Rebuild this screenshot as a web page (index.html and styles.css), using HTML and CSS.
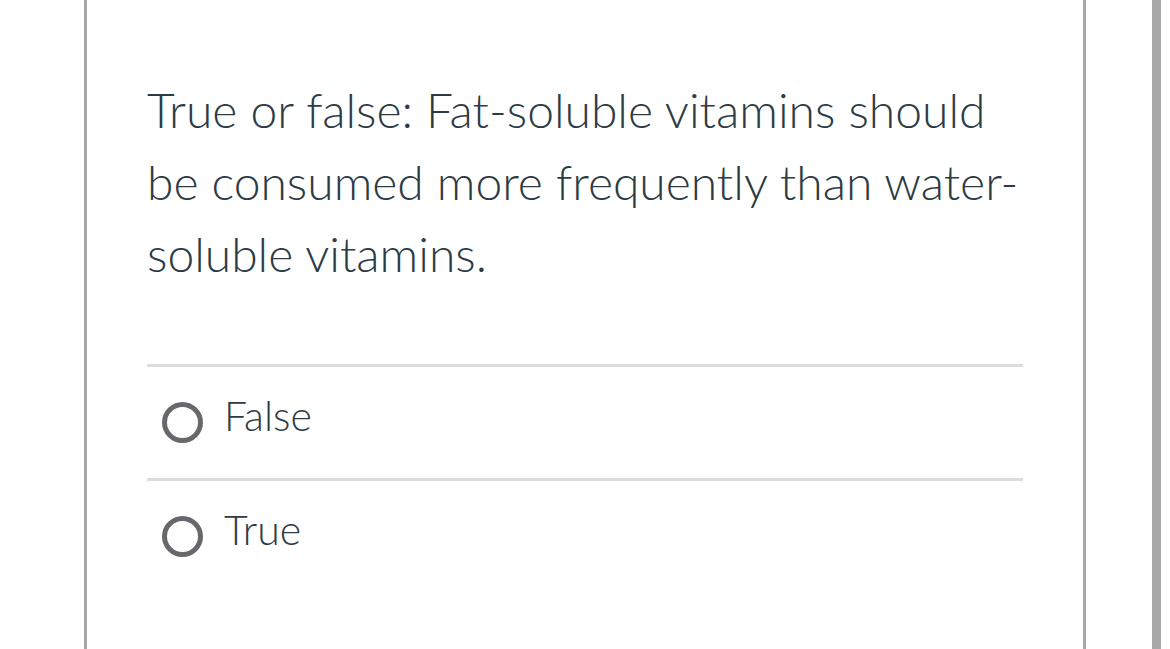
FILE: index.html
```html
<!DOCTYPE html>
<html lang="en">
<head>
<meta charset="utf-8">
<title>Quiz question</title>
<link rel="stylesheet" href="styles.css">
</head>
<body>
<div class="page">
  <div class="card">
    <div class="question">True or false: Fat-soluble vitamins should be consumed more frequently than water-soluble vitamins.</div>
    <div class="answers">
      <label class="answer">
        <span class="radio"></span>
        <span class="answer-text">False</span>
      </label>
      <label class="answer">
        <span class="radio"></span>
        <span class="answer-text">True</span>
      </label>
    </div>
  </div>
  <div class="scrollbar"></div>
</div>
</body>
</html>
```
FILE: styles.css
```css
html, body {
  margin: 0;
  padding: 0;
  background: #ffffff;
}
body {
  font-family: Lato, "Open Sans", "Liberation Sans", sans-serif;
  color: #2d3b45;
  height: 649px;
  overflow: hidden;
}
.page {
  display: flex;
  height: 649px;
  padding-left: 84px;
}
.card {
  width: 876px;
  border-left: 3px solid #a8a8a8;
  border-right: 3px solid #a8a8a8;
  padding: 74px 60px 0 60px;
  flex-shrink: 0;
}
.question {
  font-size: 48px;
  font-weight: 300;
  line-height: 72px;
}
.answers {
  margin-top: 74px;
}
.answer {
  display: flex;
  align-items: center;
  height: 111px;
  border-top: 3px solid #dcdcdc;
  padding-left: 15px;
}
.radio {
  width: 31px;
  height: 31px;
  border: 5px solid #68676c;
  border-radius: 50%;
  flex-shrink: 0;
}
.answer-text {
  font-size: 41px;
  font-weight: 300;
  margin-left: 21px;
  margin-bottom: 14px;
  line-height: 48px;
}
.scrollbar {
  width: 9px;
  margin-left: 66px;
  background: #a8a8a8;
  flex-shrink: 0;
}
```
